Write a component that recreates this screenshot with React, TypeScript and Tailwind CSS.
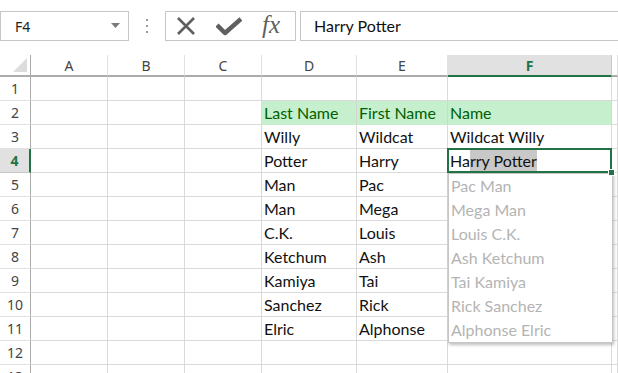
import React from "react";

const cols = [
  { key: "A", w: "w-[77px]" },
  { key: "B", w: "w-[77px]" },
  { key: "C", w: "w-[77px]" },
  { key: "D", w: "w-[95px]" },
  { key: "E", w: "w-[91px]" },
  { key: "F", w: "w-[164px]" },
  { key: "G", w: "flex-1" },
];

const rows: Record<number, { D?: string; E?: string; F?: string }> = {
  2: { D: "Last Name", E: "First Name", F: "Name" },
  3: { D: "Willy", E: "Wildcat", F: "Wildcat Willy" },
  4: { D: "Potter", E: "Harry" },
  5: { D: "Man", E: "Pac" },
  6: { D: "Man", E: "Mega" },
  7: { D: "C.K.", E: "Louis" },
  8: { D: "Ketchum", E: "Ash" },
  9: { D: "Kamiya", E: "Tai" },
  10: { D: "Sanchez", E: "Rick" },
  11: { D: "Elric", E: "Alphonse" },
};

const suggestions = [
  "Pac Man",
  "Mega Man",
  "Louis C.K.",
  "Ash Ketchum",
  "Tai Kamiya",
  "Rick Sanchez",
  "Alphonse Elric",
];

const cellFont = { fontFamily: "Lato, 'Open Sans', sans-serif" };
const uiFont = { fontFamily: "'Noto Sans', 'Open Sans', sans-serif" };

const FormulaBar = () => (
  <div className="flex items-center h-[30px] mt-[11px]">
    <div
      className="relative w-[129px] h-full border border-[#c6c6c6] flex items-center pl-[14px] text-[14px] text-[#222]"
      style={uiFont}
    >
      F4
      <svg className="absolute right-[8px] top-[11px]" width="9" height="5" viewBox="0 0 9 5">
        <path d="M0 0 L9 0 L4.5 5 Z" fill="#7a7a7a" />
      </svg>
    </div>
    <div className="w-[36px] flex flex-col items-center gap-[4px]">
      <span className="w-[2px] h-[2px] bg-[#9a9a9a]" />
      <span className="w-[2px] h-[2px] bg-[#9a9a9a]" />
      <span className="w-[2px] h-[2px] bg-[#9a9a9a]" />
    </div>
    <div className="w-[131px] h-full border border-[#c6c6c6] flex items-center pl-[10px] gap-[20px]">
      <svg width="20" height="20" viewBox="0 0 20 20">
        <path d="M2 2 L18 18 M18 2 L2 18" stroke="#5f5f5f" strokeWidth="2.6" />
      </svg>
      <svg width="26" height="20" viewBox="0 0 26 20">
        <path d="M1 9 L9 17 L25 3" stroke="#5f5f5f" strokeWidth="4.5" fill="none" strokeLinejoin="round" />
      </svg>
      <span
        className="italic text-[25px] leading-none text-[#5f5f5f] -mt-[4px]"
        style={{ fontFamily: "'Liberation Serif', 'DejaVu Serif', serif" }}
      >
        fx
      </span>
    </div>
    <div
      className="ml-[4px] flex-1 h-full border border-[#c6c6c6] border-r-0 flex items-center pl-[13px] text-[16px] text-[#111]"
      style={cellFont}
    >
      Harry Potter
    </div>
  </div>
);

const HeaderRow = () => (
  <div className="flex h-[22px] mt-[14px]" style={uiFont}>
    <div className="w-[31px] shrink-0 border-b-2 border-r border-[#ababab] relative bg-white">
      <svg className="absolute right-[3px] bottom-[3px]" width="14" height="14" viewBox="0 0 14 14">
        <path d="M14 0 L14 14 L0 14 Z" fill="#dcdcdc" />
      </svg>
    </div>
    {cols.map((c) => (
      <div
        key={c.key}
        className={`${c.w} shrink-0 flex items-center justify-center text-[14px] border-r ${
          c.key === "F"
            ? "bg-[#e1e1e1] border-b-2 border-b-[#217346] border-r-[#c6c6c6] text-[#217346] font-bold"
            : "bg-white border-b-2 border-b-[#ababab] border-r-[#e1e1e1] text-[#444]"
        }`}
      >
        {c.key !== "G" ? c.key : ""}
      </div>
    ))}
  </div>
);

const Cell = ({ col, row }: { col: string; row: number }) => {
  const data = rows[row] || {};
  const text = (data as Record<string, string | undefined>)[col];
  const green = row === 2 && (col === "D" || col === "E" || col === "F");
  const hidden = col === "F" && row >= 5 && row <= 11;
  const colDef = cols.find((c) => c.key === col)!;
  return (
    <div
      className={`${colDef.w} shrink-0 relative flex items-center px-[2px] text-[16px] whitespace-nowrap border-r border-b ${
        green ? "bg-[#c6efce] text-[#006100] border-[#c6efce] border-r-[#d4d4d4]" : "text-[#111] border-[#dadada]"
      } ${hidden ? "border-b-white" : ""} ${col === "F" && row === 4 ? "z-20" : ""}`}
      style={cellFont}
    >
      {text}
      {col === "F" && row === 4 && (
        <>
          <span>Ha</span>
          <span className="bg-[#c8c8c8] h-[22px] flex items-center">rry Potter</span>
          <div className="absolute -left-[1px] -top-[1px] -right-[1px] -bottom-[1px] border-2 border-[#217346] pointer-events-none" />
          <div className="absolute -right-[4px] -bottom-[4px] w-[7px] h-[7px] bg-[#217346] border border-white" />
        </>
      )}
    </div>
  );
};

const App = () => {
  const rowNums = [1, 2, 3, 4, 5, 6, 7, 8, 9, 10, 11, 12, 13];
  return (
    <div className="w-[618px] h-[373px] bg-white overflow-hidden relative">
      <FormulaBar />
      <HeaderRow />
      <div className="relative">
        {rowNums.map((r) => (
          <div key={r} className="flex h-[24px]">
            <div
              className={`w-[31px] shrink-0 flex items-center justify-center text-[14px] border-b ${
                r === 4
                  ? "bg-[#e1e1e1] text-[#217346] font-bold border-r-2 border-r-[#217346] border-b-[#c6c6c6]"
                  : "bg-white text-[#444] border-r border-r-[#ababab] border-b-[#e1e1e1]"
              }`}
              style={uiFont}
            >
              {r}
            </div>
            {cols.map((c) => (
              <Cell key={c.key} col={c.key} row={r} />
            ))}
          </div>
        ))}
        <div
          className="absolute z-10 left-[448px] top-[96px] w-[165px] bg-white border border-[#c6c6c6] shadow-[1px_2px_3px_rgba(0,0,0,0.25)] flex flex-col"
          style={cellFont}
        >
          {suggestions.map((s) => (
            <div key={s} className="h-[24px] flex items-center pl-[2px] text-[16px] text-[#b4b4b4] whitespace-nowrap">
              {s}
            </div>
          ))}
        </div>
      </div>
    </div>
  );
};

export default App;
